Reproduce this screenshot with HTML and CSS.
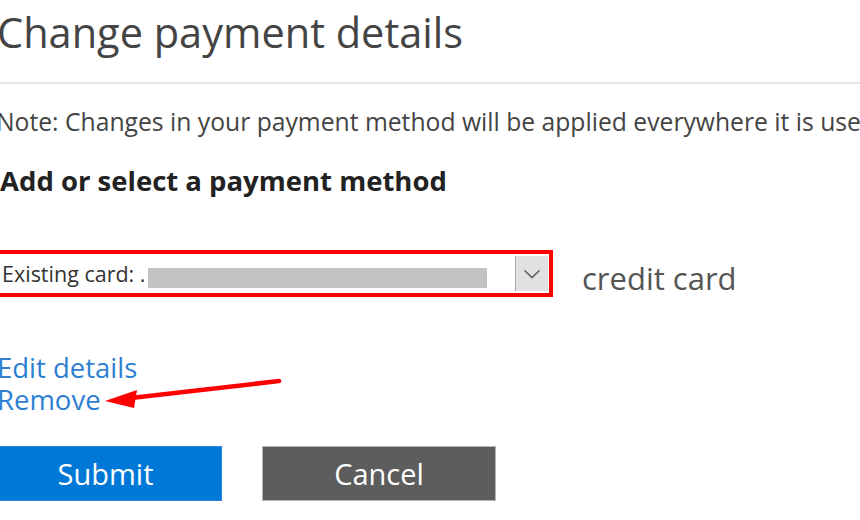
FILE: index.html
```html
<!DOCTYPE html>
<html>
<head>
<meta charset="utf-8">
<link rel="stylesheet" href="styles.css">
</head>
<body>
<div class="page">
  <h1 class="title">Change payment details</h1>
  <div class="rule"></div>
  <p class="note">Note: Changes in your payment method will be applied everywhere it is used.</p>
  <h2 class="heading">Add or select a payment method</h2>
  <div class="row">
    <div class="highlight">
      <div class="select">
        <span class="select-text">Existing card: .</span>
        <span class="blur"></span>
        <span class="select-btn">
          <svg width="18" height="10" viewBox="0 0 18 10"><path d="M1.5 1.5 L9 8.5 L16.5 1.5" fill="none" stroke="#555" stroke-width="1.4"/></svg>
        </span>
      </div>
    </div>
    <span class="card-type">credit card</span>
  </div>
  <div class="links">
    <a class="link">Edit details</a>
    <a class="link">Remove</a>
    <svg class="arrow" width="200" height="40" viewBox="0 0 200 40">
      <path d="M178 10 L30 27" stroke="#ff0000" stroke-width="4.5" stroke-linecap="round" fill="none"/>
      <path d="M4 30 L36 19 L33 37 Z" fill="#ff0000"/>
    </svg>
  </div>
  <div class="buttons">
    <button class="btn btn-primary">Submit</button>
    <button class="btn btn-secondary">Cancel</button>
  </div>
</div>
</body>
</html>
```
FILE: styles.css
```css
html, body {
  margin: 0;
  padding: 0;
  background: #ffffff;
  overflow: hidden;
}
.page {
  width: 900px;
  margin-left: -3px;
  font-family: "Open Sans", "Noto Sans", sans-serif;
  color: #444;
}
.title {
  margin: 0;
  padding-top: 4px;
  font-size: 41.5px;
  font-weight: 400;
  line-height: 56px;
  color: #444;
  white-space: nowrap;
}
.rule {
  margin-top: 22px;
  margin-left: 3px;
  border-top: 2px solid #e6e6e6;
  width: 860px;
}
.note {
  margin: 23px 0 0 -1px;
  font-size: 24.7px;
  line-height: 30px;
  color: #444;
  white-space: nowrap;
}
.heading {
  margin: 28px 0 0 3px;
  font-size: 27.5px;
  font-weight: 700;
  line-height: 32px;
  color: #222;
  white-space: nowrap;
}
.row {
  display: flex;
  align-items: flex-start;
  margin-top: 53px;
  margin-left: -2px;
}
.highlight {
  border: 4px solid #ff0000;
  width: 550px;
  height: 39px;
}
.select {
  position: relative;
  display: flex;
  align-items: center;
  height: 39px;
  background: #fff;
}
.select-text {
  flex: 1;
  padding-left: 3px;
  font-size: 21.5px;
  color: #333;
}
.blur {
  position: absolute;
  left: 149px;
  top: 14px;
  width: 339px;
  height: 20px;
  background: #c3c3c3;
}
.select-btn {
  display: flex;
  align-items: center;
  justify-content: center;
  align-self: stretch;
  width: 32px;
  margin: 2px 1px 2px 0;
  background: #e1e1e1;
  border-left: 1px solid #a8a8a8;
}
.card-type {
  margin: 7px 0 0 29px;
  font-size: 31px;
  line-height: 42px;
  color: #555;
}
.links {
  position: relative;
  display: flex;
  flex-direction: column;
  align-items: flex-start;
  margin-top: 53px;
}
.link {
  font-size: 27.5px;
  line-height: 32px;
  color: #2e7fd2;
}
.arrow {
  position: absolute;
  left: 104px;
  top: 19px;
}
.buttons {
  display: flex;
  gap: 40px;
  margin-top: 30px;
  margin-left: -8px;
}
.btn {
  height: 55px;
  border: 1px solid transparent;
  font-family: "Open Sans", "Noto Sans", sans-serif;
  font-size: 29px;
  color: #fff;
  padding: 0;
}
.btn-primary {
  width: 233px;
  background: #0078d7;
  border-color: #2b88e0;
}
.btn-secondary {
  width: 234px;
  background: #5d5d5d;
  border-color: #b5b5b5;
}
```
